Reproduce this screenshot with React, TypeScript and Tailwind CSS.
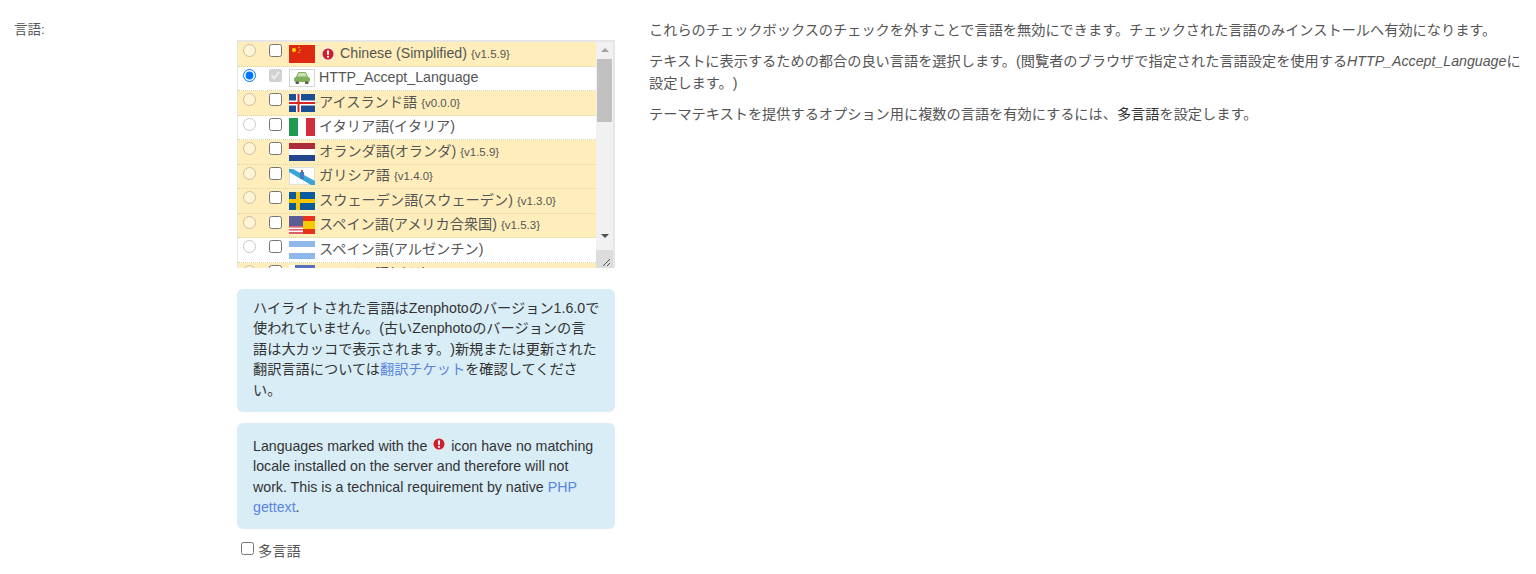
import React from 'react';

const font = { fontFamily: '"Liberation Sans", "Noto Sans CJK JP", sans-serif' };

const AlertIcon = () => (
  <svg width="16" height="16" viewBox="0 0 16 16" className="shrink-0">
    <circle cx="8" cy="8" r="7.5" fill="#e8e8e8" opacity="0.6" />
    <circle cx="8" cy="8" r="5.5" fill="#cf1f2e" />
    <rect x="7" y="4.2" width="2" height="4.8" rx="1" fill="#fff" />
    <circle cx="8" cy="10.8" r="1.1" fill="#fff" />
  </svg>
);

const flags: Record<string, React.ReactNode> = {
  cn: (
    <>
      <rect width="26" height="18" fill="#de2910" />
      <circle cx="5" cy="5" r="2" fill="#ffde00" />
      <circle cx="10" cy="2.5" r="0.7" fill="#ffde00" />
      <circle cx="11" cy="5" r="0.7" fill="#ffde00" />
      <circle cx="10" cy="7.5" r="0.7" fill="#ffde00" />
    </>
  ),
  car: (
    <>
      <rect x="0.5" y="0.5" width="25" height="17" fill="#fff" stroke="#d5d5d5" />
      <path d="M7.5 8 L9.5 3.5 H16.5 L18.5 8 Z" fill="#c9e2b4" stroke="#7fae5e" />
      <rect x="5" y="8" width="16" height="5" rx="2" fill="#7fb05c" />
      <rect x="6.5" y="12.5" width="3.5" height="2.5" rx="1" fill="#555" />
      <rect x="16" y="12.5" width="3.5" height="2.5" rx="1" fill="#555" />
    </>
  ),
  is: (
    <>
      <rect width="26" height="18" fill="#1c4e96" />
      <rect x="7" width="5" height="18" fill="#fff" />
      <rect y="6.5" width="26" height="5" fill="#fff" />
      <rect x="8.5" width="2" height="18" fill="#d72828" />
      <rect y="8" width="26" height="2" fill="#d72828" />
    </>
  ),
  it: (
    <>
      <rect width="26" height="18" fill="#fff" />
      <rect width="9" height="18" fill="#1f9a50" />
      <rect x="17" width="9" height="18" fill="#d22f3c" />
    </>
  ),
  nl: (
    <>
      <rect width="26" height="6" fill="#ae2b3a" />
      <rect y="6" width="26" height="6" fill="#fff" />
      <rect y="12" width="26" height="6" fill="#21468b" />
    </>
  ),
  gl: (
    <>
      <rect x="0.5" y="0.5" width="25" height="17" fill="#fff" stroke="#e0e0e0" />
      <path d="M0 2 H4 L26 14 V18 H22 L0 5 Z" fill="#3aa6d8" />
      <rect x="11" y="5" width="4" height="7" fill="#3f7fc0" />
      <rect x="12" y="3" width="2" height="2" fill="#c8553d" />
    </>
  ),
  se: (
    <>
      <rect width="26" height="18" fill="#0b5a9c" />
      <rect x="7" width="4" height="18" fill="#f7c600" />
      <rect y="7" width="26" height="4" fill="#f7c600" />
    </>
  ),
  us: (
    <>
      <rect width="14" height="18" fill="#fff" />
      <rect y="10" width="14" height="1.6" fill="#d9606c" />
      <rect y="13" width="14" height="1.6" fill="#d9606c" />
      <rect y="16" width="14" height="2" fill="#d9606c" />
      <rect width="14" height="10" fill="#5b5b95" />
      <rect x="14" width="12" height="18" fill="#e8331c" />
      <rect x="14" y="5" width="12" height="8" fill="#f8c800" />
    </>
  ),
  ar: (
    <>
      <rect width="26" height="18" fill="#fff" />
      <rect width="26" height="6" fill="#8fb8ea" />
      <rect y="12" width="26" height="6" fill="#8fb8ea" />
    </>
  ),
  next: (
    <>
      <rect width="26" height="18" fill="#fff" />
      <rect x="6" width="20" height="18" fill="#5570c0" />
    </>
  ),
};

const Flag = ({ code }: { code: string }) => (
  <svg width="26" height="18" viewBox="0 0 26 18" className="block shrink-0">
    {flags[code]}
  </svg>
);

interface Lang {
  flag: string;
  name: string;
  version?: string;
  old: boolean;
  alert?: boolean;
  selected?: boolean;
}

const languages: Lang[] = [
  { flag: 'cn', name: 'Chinese (Simplified)', version: '{v1.5.9}', old: true, alert: true },
  { flag: 'car', name: 'HTTP_Accept_Language', old: false, selected: true },
  { flag: 'is', name: 'アイスランド語', version: '{v0.0.0}', old: true },
  { flag: 'it', name: 'イタリア語(イタリア)', old: false },
  { flag: 'nl', name: 'オランダ語(オランダ)', version: '{v1.5.9}', old: true },
  { flag: 'gl', name: 'ガリシア語', version: '{v1.4.0}', old: true },
  { flag: 'se', name: 'スウェーデン語(スウェーデン)', version: '{v1.3.0}', old: true },
  { flag: 'us', name: 'スペイン語(アメリカ合衆国)', version: '{v1.5.3}', old: true },
  { flag: 'ar', name: 'スペイン語(アルゼンチン)', old: false },
  { flag: 'next', name: 'スペイン語(チリ)', old: true },
];

const LangRow = ({ lang }: { lang: Lang }) => (
  <div
    className={`flex h-[24.5px] shrink-0 items-center border-b border-dotted border-[#d8d8a0] pl-[5px] ${
      lang.old ? 'bg-[#ffeebb]' : 'bg-white'
    }`}
  >
    <input
      type="radio"
      name="locale"
      readOnly
      checked={!!lang.selected}
      className={`m-0 mb-[6px] h-[13px] w-[13px] ${lang.selected ? '' : 'opacity-40'}`}
    />
    <input
      type="checkbox"
      readOnly
      checked={!!lang.selected}
      disabled={!!lang.selected}
      className="m-0 mb-[6px] ml-[13px] h-[13px] w-[13px]"
    />
    <span className="ml-[7px]">
      <Flag code={lang.flag} />
    </span>
    {lang.alert && (
      <span className="ml-[5px]">
        <AlertIcon />
      </span>
    )}
    <span className="ml-[4px] mb-[1px] whitespace-nowrap text-[14.2px] text-[#555]">
      {lang.name}
      {lang.version && <span className="ml-[4px] text-[11.5px]">{lang.version}</span>}
    </span>
  </div>
);

const App = () => {
  return (
    <div
      style={font}
      className="flex h-[574px] w-[1536px] overflow-hidden bg-white pt-[19px] text-[14.2px] text-[#555] [text-spacing-trim:space-all]"
    >
      <div className="w-[237px] shrink-0 pl-[14px] pt-[2px] text-[13.5px] leading-[18px]">言語:</div>

      <div className="w-[378px] shrink-0 pt-[21px]">
        <div className="relative flex h-[228px] overflow-hidden border-2 border-b-0 border-l border-[#e6e6e6]">
          <div className="flex min-w-0 flex-1 flex-col overflow-hidden">
            {languages.map((lang) => (
              <LangRow key={lang.name} lang={lang} />
            ))}
          </div>
          <div className="flex w-[17px] shrink-0 flex-col items-center bg-[#f1f1f1]">
            <div className="mt-[6px] h-0 w-0 border-x-[4px] border-b-[4px] border-x-transparent border-b-[#a3a3a3]" />
            <div className="mt-[7px] h-[63px] w-[15px] bg-[#c1c1c1]" />
            <div className="mt-[112px] h-0 w-0 border-x-[4px] border-t-[4px] border-x-transparent border-t-[#505050]" />
          </div>
          <div className="absolute bottom-0 right-0 h-[18px] w-[17px] bg-[#dcdcdc]">
            <svg width="17" height="18" viewBox="0 0 17 18">
              <path d="M7 16 L14 9 M11 16 L14 13" stroke="#555" strokeWidth="1" />
            </svg>
          </div>
        </div>

        <div className="mt-[21px] rounded-[6px] bg-[#d9edf7] pb-[12px] pl-[16px] pr-[8px] pt-[9px] text-[14.2px] leading-[20.4px] text-[#333]">
          ハイライトされた言語はZenphotoのバージョン1.6.0で
          <br />
          使われていません。(古いZenphotoのバージョンの言
          <br />
          語は大カッコで表示されます。)新規または更新された
          <br />
          翻訳言語については<span className="text-[#5b84dc]">翻訳チケット</span>を確認してくださ
          <br />
          い。
        </div>

        <div className="mt-[11px] rounded-[6px] bg-[#d9edf7] pb-[11px] pl-[16px] pr-[16px] pt-[13px] text-[14.2px] leading-[20.4px] text-[#333]">
          Languages marked with the{' '}
          <span className="relative -top-[3px] -my-[4px] inline-block h-[16px] w-[16px] align-middle">
            <AlertIcon />
          </span>{' '}
          icon have no matching locale installed on the server and therefore will not work. This is a technical requirement by native{' '}
          <span className="text-[#5b84dc]">PHP gettext</span>.
        </div>

        <label className="mt-[13px] flex items-center pl-[4px] text-[14.2px] leading-[18px]">
          <input type="checkbox" className="m-0 mb-[4px] h-[13px] w-[13px]" />
          <span className="ml-[4px]">多言語</span>
        </label>
      </div>

      <div className="ml-[34px] w-[875px] shrink-0 text-[14.2px] leading-[22px]">
        <p>これらのチェックボックスのチェックを外すことで言語を無効にできます。チェックされた言語のみインストールへ有効になります。</p>
        <p className="mt-[9px]">
          テキストに表示するための都合の良い言語を選択します。(閲覧者のブラウザで指定された言語設定を使用する<em>HTTP_Accept_Language</em>に設定します。)
        </p>
        <p className="mt-[9px]">
          テーマテキストを提供するオプション用に複数の言語を有効にするには、<span className="text-[#333]">多言語</span>を設定します。
        </p>
      </div>
    </div>
  );
};

export default App;
